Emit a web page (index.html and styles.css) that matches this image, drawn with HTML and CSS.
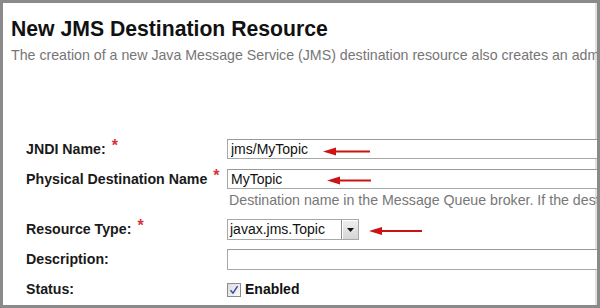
FILE: index.html
```html
<!DOCTYPE html>
<html lang="en">
<head>
    <meta charset="UTF-8">
    <title>New JMS Destination Resource</title>
    <link rel="stylesheet" href="styles.css">
</head>
<body>
    <div class="frame">
        <h1 class="page-title">New JMS Destination Resource</h1>
        <p class="intro">The creation of a new Java Message Service (JMS) destination resource also creates an admin object resource.</p>

        <div class="form">
            <div class="row">
                <div class="label">JNDI Name:<span class="req">*</span></div>
                <div class="field"><input class="text" type="text" value="jms/MyTopic" readonly></div>
            </div>
            <div class="row">
                <div class="label">Physical Destination Name<span class="req">*</span></div>
                <div class="field">
                    <input class="text" type="text" value="MyTopic" readonly>
                    <div class="help">Destination name in the Message Queue broker. If the destination does not exist, it will be created.</div>
                </div>
            </div>
            <div class="row row-tall">
                <div class="label">Resource Type:<span class="req">*</span></div>
                <div class="field">
                    <div class="select">
                        <span class="select-value">javax.jms.Topic</span>
                        <span class="select-btn">
                            <svg width="7" height="4" viewBox="0 0 7 4"><polygon points="0,0 7,0 3.5,4" fill="#111"/></svg>
                        </span>
                    </div>
                </div>
            </div>
            <div class="row row-tall">
                <div class="label">Description:</div>
                <div class="field"><input class="text text-tall" type="text" value="" readonly></div>
            </div>
            <div class="row">
                <div class="label">Status:</div>
                <div class="field check-field">
                    <span class="checkbox">
                        <svg width="10" height="10" viewBox="0 0 10 10"><path d="M1.5 5.2 L4 8.2 L8.6 1.2" fill="none" stroke="#2b4aa8" stroke-width="1.4"/></svg>
                    </span>
                    <span class="check-label">Enabled</span>
                </div>
            </div>
        </div>

        <!-- callout arrows drawn over the screenshot -->
        <svg class="callouts" width="600" height="308" viewBox="0 0 600 308">
            <g fill="#cc1212" stroke="#cc1212">
                <line x1="334" y1="151.5" x2="370" y2="151.5" stroke-width="2"/>
                <polygon points="323,151.5 336,147.5 336,155.5" stroke="none"/>
                <line x1="338" y1="180.5" x2="371" y2="180.5" stroke-width="2"/>
                <polygon points="327,180.5 340,176.5 340,184.5" stroke="none"/>
                <line x1="380" y1="231" x2="422" y2="231" stroke-width="2"/>
                <polygon points="369,231 382,227 382,235" stroke="none"/>
            </g>
        </svg>
    </div>
</body>
</html>
```

FILE: styles.css
```css
body {
    margin: 0;
    font-family: "Liberation Sans", Arial, sans-serif;
    color: #111;
    background: #fff;
}
.frame {
    position: relative;
    width: 600px;
    height: 308px;
    box-sizing: border-box;
    border: 3px solid #8a8a8a;
    box-shadow: inset -2px 0 0 #e2e2e2;
    padding-left: 8px;
    overflow: hidden;
}
.page-title {
    margin: 0;
    padding-top: 13px;
    font-size: 21.2px;
    line-height: 25px;
    font-weight: bold;
    color: #111;
    white-space: nowrap;
}
.intro {
    margin: 6px 0 0;
    font-size: 14.2px;
    line-height: 17px;
    color: #767676;
    white-space: nowrap;
}
.form {
    margin-top: 75px;
    padding-left: 15px;
}
.row {
    display: flex;
    align-items: flex-start;
    margin-bottom: 10px;
}
.row-tall {
    margin-bottom: 9px;
}
.label {
    width: 201px;
    flex: none;
    font-size: 14.2px;
    line-height: 20px;
    font-weight: bold;
    color: #1a1a1a;
    white-space: nowrap;
}
.row-tall .label {
    line-height: 21px;
}
.req {
    margin-left: 6px;
    color: #d8323c;
    font-size: 16px;
    vertical-align: 3px;
    line-height: 0;
}
.field {
    flex: none;
    width: 400px;
}
.text {
    display: block;
    width: 400px;
    height: 20px;
    box-sizing: border-box;
    margin: 0;
    padding: 0 3px;
    border: 1px solid #a8a8a8;
    border-top-color: #9a9a9a;
    font-family: "Liberation Sans", Arial, sans-serif;
    font-size: 14px;
    color: #111;
    background: #fff;
    outline: none;
}
.text-tall {
    height: 21px;
}
.help {
    margin-top: 2px;
    padding-left: 2px;
    font-size: 14.2px;
    line-height: 18px;
    color: #777;
    white-space: nowrap;
}
.select {
    display: flex;
    align-items: stretch;
    width: 132px;
    height: 21px;
    box-sizing: border-box;
    border: 1px solid #a8a8a8;
    background: #fff;
}
.select-value {
    flex: 1;
    padding-left: 2px;
    font-size: 14px;
    line-height: 19px;
    color: #111;
}
.select-btn {
    width: 16px;
    display: flex;
    align-items: center;
    justify-content: center;
    border-left: 1px solid #8e8e8e;
    background: linear-gradient(#efefef, #d6d6d6);
    box-shadow: inset 1px 1px 0 #fff;
}
.check-field {
    display: flex;
    align-items: center;
    height: 20px;
}
.checkbox {
    width: 14px;
    height: 14px;
    box-sizing: border-box;
    margin-top: 2px;
    border: 1px solid #8c8c8c;
    background: linear-gradient(135deg, #dcdcdc, #fafafa);
    display: flex;
    align-items: center;
    justify-content: center;
}
.check-label {
    margin-left: 4px;
    font-size: 14px;
    font-weight: bold;
    color: #111;
}
.callouts {
    position: absolute;
    left: -3px;
    top: -3px;
    pointer-events: none;
}
```
